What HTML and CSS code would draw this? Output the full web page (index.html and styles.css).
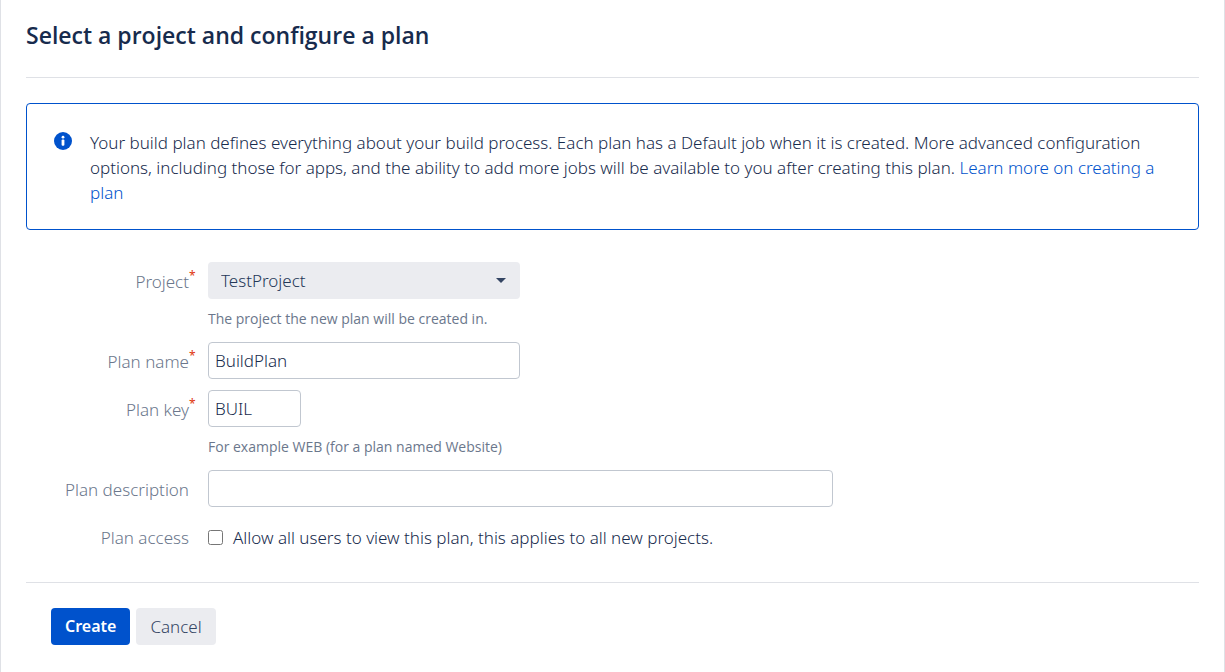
FILE: index.html
```html
<!DOCTYPE html>
<html lang="en">
<head>
    <meta charset="UTF-8">
    <meta name="viewport" content="width=device-width, initial-scale=1.0">
    <title>Select a project and configure a plan</title>
    <link rel="stylesheet" href="styles.css">
</head>
<body>
    <main class="page">
        <h1>Select a project and configure a plan</h1>

        <div class="info-message">
            <svg class="info-icon" viewBox="0 0 18 18" aria-hidden="true">
                <circle cx="9" cy="9" r="9" fill="#0052cc"/>
                <circle cx="9" cy="5.2" r="1.4" fill="#fff"/>
                <rect x="7.6" y="7.6" width="2.8" height="6.2" rx="1" fill="#fff"/>
            </svg>
            <p>Your build plan defines everything about your build process. Each plan has a Default job when it is created. More advanced configuration options, including those for apps, and the ability to add more jobs will be available to you after creating this plan. <a href="#">Learn more on creating a plan</a></p>
        </div>

        <form>
            <div class="field-group">
                <label class="field-label required" for="project">Project</label>
                <div class="field">
                    <div class="select-wrap">
                        <select id="project">
                            <option>TestProject</option>
                        </select>
                    </div>
                    <div class="description">The project the new plan will be created in.</div>
                </div>
            </div>

            <div class="field-group">
                <label class="field-label required" for="plan-name">Plan name</label>
                <div class="field">
                    <input type="text" class="text" id="plan-name" value="BuildPlan">
                </div>
            </div>

            <div class="field-group">
                <label class="field-label required" for="plan-key">Plan key</label>
                <div class="field">
                    <input type="text" class="text short-field" id="plan-key" value="BUIL">
                    <div class="description">For example WEB (for a plan named Website)</div>
                </div>
            </div>

            <div class="field-group">
                <label class="field-label" for="plan-description">Plan description</label>
                <div class="field">
                    <input type="text" class="text long-field" id="plan-description">
                </div>
            </div>

            <div class="field-group" role="group" aria-labelledby="access-label">
                <span class="field-label" id="access-label">Plan access</span>
                <div class="field checkbox">
                    <input type="checkbox" id="plan-access">
                    <label for="plan-access">Allow all users to view this plan, this applies to all new projects.</label>
                </div>
            </div>

            <div class="buttons">
                <button type="submit" class="primary">Create</button>
                <button type="button">Cancel</button>
            </div>
        </form>
    </main>
</body>
</html>
```
FILE: styles.css
```css
* {
    box-sizing: border-box;
}
body {
    margin: 0;
    font-family: 'Noto Sans', 'Open Sans', sans-serif;
    font-size: 17px;
    font-weight: 300;
    line-height: 25px;
    color: #172b4d;
    background: #fff;
}
.page {
    min-height: 100vh;
    padding: 20px 25px 25px;
    border: solid #dfe1e6;
    border-width: 0 1px;
}
h1 {
    margin: 0 0 25px;
    padding-bottom: 27px;
    border-bottom: 1px solid #dfe1e6;
    font-family: 'Open Sans', sans-serif;
    font-size: 23px;
    font-weight: 600;
    line-height: 30px;
}
a {
    color: #0052cc;
    text-decoration: none;
}
.info-message {
    display: flex;
    gap: 18px;
    margin-bottom: 32px;
    padding: 26px 27px 24px;
    border: 1px solid #0052cc;
    border-radius: 4px;
}
.info-icon {
    flex: none;
    width: 18px;
    height: 18px;
    margin-top: 2px;
}
.info-message p {
    margin: 0;
}
.field-group {
    display: flex;
    gap: 19px;
    margin-bottom: 11px;
}
.field-label {
    position: relative;
    flex: none;
    width: 163px;
    padding-top: 7px;
    color: #6b778c;
    text-align: right;
}
.required::after {
    content: '*';
    position: absolute;
    top: 1px;
    left: 100%;
    color: #de350b;
    font-size: 12px;
    font-weight: 400;
}
.field {
    flex: 1;
}
.text,
.select-wrap {
    display: block;
    width: 312px;
    max-width: 100%;
    height: 37px;
}
.text {
    padding: 0 6px;
    border: 1px solid #c1c7d0;
    border-radius: 4px;
    color: #172b4d;
    font: inherit;
}
.short-field {
    width: 93px;
}
.long-field {
    width: 625px;
}
.select-wrap {
    position: relative;
}
.select-wrap::after {
    content: '';
    position: absolute;
    top: 16px;
    right: 14px;
    border: solid transparent;
    border-width: 5px 5px 0;
    border-top-color: #344563;
    pointer-events: none;
}
select {
    appearance: none;
    width: 100%;
    height: 100%;
    padding: 0 13px;
    border: 0;
    border-radius: 4px;
    background: #ebecf0;
    color: #253858;
    font: inherit;
}
.description {
    margin-top: 7px;
    color: #6b778c;
    font-family: 'Open Sans', sans-serif;
    font-size: 14px;
    font-weight: 400;
}
.checkbox {
    display: flex;
    align-items: center;
    gap: 10px;
    padding-top: 7px;
}
.checkbox input {
    width: 15px;
    height: 15px;
    margin: 0;
}
.buttons {
    display: flex;
    gap: 6px;
    margin-top: 32px;
    padding: 25px 25px 0;
    border-top: 1px solid #dfe1e6;
}
button {
    height: 37px;
    padding: 0 14px;
    border: 0;
    border-radius: 4px;
    background: #ebecf0;
    color: #344563;
    font: inherit;
    cursor: pointer;
}
.primary {
    background: #0052cc;
    color: #fff;
    font-size: 16px;
    font-weight: 600;
}
```
